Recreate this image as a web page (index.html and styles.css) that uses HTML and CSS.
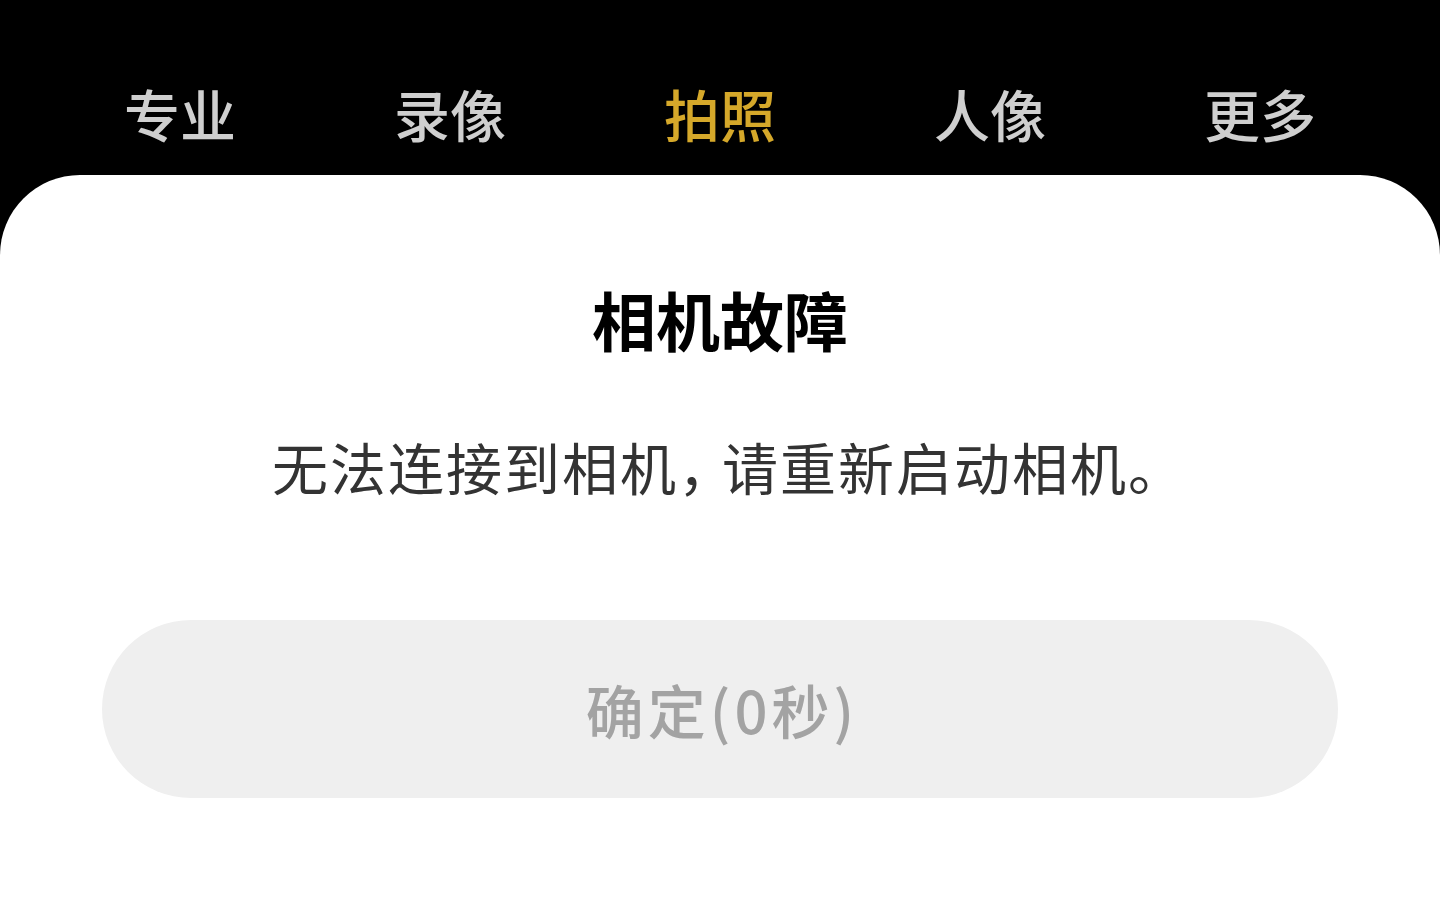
FILE: index.html
```html
<!DOCTYPE html>
<html lang="zh-CN">
<head>
<meta charset="utf-8">
<title>相机故障</title>
<link rel="stylesheet" href="styles.css">
</head>
<body>
<div class="screen">
  <nav class="tabs">
    <div class="tab">专业</div>
    <div class="tab">录像</div>
    <div class="tab active">拍照</div>
    <div class="tab">人像</div>
    <div class="tab">更多</div>
  </nav>
  <section class="sheet">
    <h1 class="title">相机故障</h1>
    <p class="message">无法连接到相机<span class="comma">，</span>请重新启动相机<span class="stop">。</span></p>
    <div class="actions">
      <button class="confirm">确定(0秒)</button>
    </div>
  </section>
</div>
</body>
</html>
```

FILE: styles.css
```css
html, body {
  margin: 0;
  padding: 0;
  background: #000;
}
body {
  font-family: "Noto Sans CJK SC", "Noto Sans", sans-serif;
  width: 1440px;
  height: 900px;
  overflow: hidden;
}
.screen {
  display: flex;
  flex-direction: column;
  height: 900px;
}
.tabs {
  display: flex;
  height: 175px;
  padding: 85px 45px 0;
  box-sizing: border-box;
}
.tab {
  flex: 1;
  text-align: center;
  font-size: 56px;
  line-height: 56px;
  font-weight: 500;
  color: #cfcfcf;
}
.tab.active {
  color: #d5a82a;
}
.sheet {
  flex: 1;
  background: #fff;
  border-radius: 80px 80px 0 0;
  display: flex;
  flex-direction: column;
  align-items: center;
  padding-top: 111px;
}
.title {
  margin: 0;
  font-size: 64px;
  line-height: 64px;
  font-weight: 700;
  color: #000;
}
.message {
  margin: 88px 0 0;
  font-size: 56px;
  line-height: 56px;
  font-weight: 400;
  color: #333;
  letter-spacing: 2px;
  white-space: nowrap;
}
.comma {
  letter-spacing: -12px;
}
.stop {
  letter-spacing: -16px;
}
.actions {
  align-self: stretch;
  padding: 0 102px;
  margin-top: 126px;
}
.confirm {
  display: block;
  width: 100%;
  height: 178px;
  border: none;
  border-radius: 89px;
  background: #efefef;
  color: #a3a3a3;
  font-family: inherit;
  font-size: 58px;
  line-height: 178px;
  font-weight: 500;
  letter-spacing: 4px;
  padding: 0 0 0 4px;
}
```
